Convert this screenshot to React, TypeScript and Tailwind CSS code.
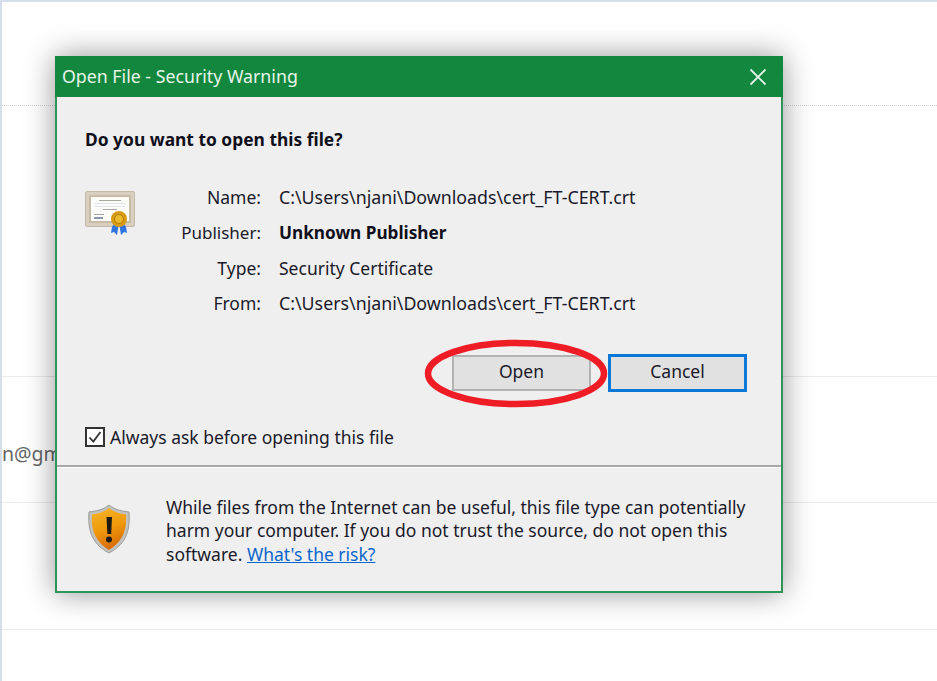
function CertIcon() {
  return (
    <svg width="52" height="46" viewBox="0 0 52 46" className="block">
      <rect x="0.5" y="0.5" width="49" height="35" rx="1.5" fill="#d8cfc0" stroke="#c4b9a6" />
      <rect x="4" y="4" width="42" height="28" fill="#c8bba6" />
      <rect x="6" y="6" width="38" height="24" fill="#fbfbf8" />
      <rect x="14" y="9" width="22" height="1" fill="#a9a9a0" />
      <rect x="10" y="12" width="30" height="1" fill="#dfe3ea" />
      <rect x="10" y="15" width="30" height="1" fill="#e3e6ec" />
      <rect x="18" y="18" width="14" height="1" fill="#a8a8a8" />
      <rect x="9" y="23" width="10" height="1" fill="#a5a5a5" />
      <rect x="9" y="26" width="9" height="2" fill="#8a97ad" />
      <path d="M27 36 l4 -6 l3 2 l-1 6 l-1 6 l-3 -3 l-3 1 z" fill="#2f74e0" />
      <path d="M41 36 l-4 -6 l-3 2 l1 6 l1 6 l3 -3 l3 1 z" fill="#2f74e0" />
      <circle cx="34" cy="28" r="8" fill="#d69a10" />
      <circle cx="34" cy="28" r="4.5" fill="#eab92c" stroke="#b47e0a" strokeWidth="1" />
    </svg>
  );
}

function ShieldIcon() {
  return (
    <svg width="44" height="50" viewBox="0 0 44 50" className="block">
      <defs>
        <linearGradient id="sh" x1="0" y1="0" x2="0.3" y2="1">
          <stop offset="0" stopColor="#f7b52a" />
          <stop offset="0.55" stopColor="#f09a0c" />
          <stop offset="1" stopColor="#d96f04" />
        </linearGradient>
      </defs>
      <path d="M22 1 C28 6 35 7 42 8 C43 24 41 39 22 49 C3 39 1 24 2 8 C9 7 16 6 22 1 Z" fill="#c2c2bf" stroke="#9a9a98" strokeWidth="1" />
      <path d="M22 4 C27 8 33 10 39 10.500 C40 24 37 37 22 46 C7 37 4 24 5 10.500 C11 10 17 8 22 4 Z" fill="url(#sh)" />
      <path d="M19.500 13 h5.500 l-0.800 17 h-3.800 z" fill="#1d1a14" />
      <circle cx="22" cy="35.500" r="3" fill="#1d1a14" />
    </svg>
  );
}

function Row({ label, labelClass, children }: { label: string; labelClass?: string; children: React.ReactNode }) {
  return (
    <div className="flex h-[35.300px] items-center">
      <div className={"w-[222px] pr-[18px] text-right " + (labelClass ?? "")}>{label}</div>
      <div>{children}</div>
    </div>
  );
}

export default function App() {
  return (
    <div className="relative h-[681px] w-[937px] overflow-hidden border-l-2 border-t-2 border-[#d5deeb] bg-white font-['Noto_Sans',sans-serif]">
      <div className="h-[104px] border-b border-dotted border-[#cfcfcf]" />
      <div className="h-[271px] border-b border-[#e8ecef]" />
      <div className="h-[126px] border-b border-[#e8ecef] pt-[62px] text-[19.500px] leading-[30px] text-[#666666]">
        <span>n@gmail.com</span>
      </div>
      <div className="h-[127px] border-b border-[#e8ecef]" />

      <div className="absolute left-[53px] top-[54px] flex h-[537px] w-[728px] flex-col border-2 border-t-0 border-[#2f9458] bg-[#efefef] text-[17.500px] text-[#1a1a2a] shadow-[0_0_28px_rgba(0,0,0,0.42)]">
        <div className="mx-[-2px] flex h-[41px] shrink-0 items-center justify-between bg-[#14873f] pl-[7px] pr-[16px] text-[#e6f5ea]">
          <span className="text-[17.750px]">Open File - Security Warning</span>
          <svg width="18" height="18" viewBox="0 0 18 18">
            <path d="M1.500 1.500 L16.500 16.500 M16.500 1.500 L1.500 16.500" stroke="#e6f5ea" strokeWidth="1.800" />
          </svg>
        </div>

        <div className="flex flex-1 flex-col">
          <h1 className="ml-[28px] mt-[28px] text-[17.400px] font-bold leading-[28px] text-[#10101c]">Do you want to open this file?</h1>

          <div className="relative mt-[26.500px]">
            <div className="absolute left-[28px] top-[11.500px]">
              <CertIcon />
            </div>
            <Row label="Name:"><span className="text-[17.800px]">C:\Users\njani\Downloads\cert_FT-CERT.crt</span></Row>
            <Row label="Publisher:" labelClass="text-[17px]">
              <b className="text-[17.200px] text-[#10101c]">Unknown Publisher</b>
            </Row>
            <Row label="Type:">Security Certificate</Row>
            <Row label="From:"><span className="text-[17.800px]">C:\Users\njani\Downloads\cert_FT-CERT.crt</span></Row>
          </div>

          <div className="mt-[33px] flex items-start justify-end gap-[17px] pr-[34px]">
            <button className="mt-[1px] h-[36px] w-[139px] border-2 border-[#b2b2b2] bg-[#e1e1e1] pb-[3px]">Open</button>
            <button className="h-[38px] w-[139px] border-[3px] border-[#0a78d7] bg-[#e1e1e1] pb-[3px]">Cancel</button>
          </div>

          <label className="ml-[28px] mt-[33px] flex h-[24px] items-center gap-[5px]">
            <span className="flex h-[20px] w-[20px] items-center justify-center border-2 border-[#333333] bg-white">
              <svg width="16" height="16" viewBox="0 0 16 16">
                <path d="M2.500 8.500 L6.300 12.500 L13.500 3" fill="none" stroke="#333333" strokeWidth="1.800" />
              </svg>
            </span>
            Always ask before opening this file
          </label>

          <div className="mt-[16px] h-[2px] bg-[#a8a8a8] shadow-[0_1px_0_#ffffff]" />

          <div className="flex flex-1 items-start">
            <div className="ml-[30px] mt-[37px] w-[79px]">
              <ShieldIcon />
            </div>
            <p className="mt-[29px] w-[600px] leading-[23.400px]">
              While files from the Internet can be useful, this file type can potentially harm your computer. If you do not trust the source, do not open this software.{" "}
              <a className="text-[#0a66cc] underline">What's the risk?</a>
            </p>
          </div>
        </div>
      </div>

      <svg className="absolute left-[422px] top-[336px]" width="184" height="72" viewBox="0 0 184 72">
        <ellipse cx="92" cy="35.500" rx="88" ry="30.500" fill="none" stroke="#ee1c25" strokeWidth="6.500" />
      </svg>
    </div>
  );
}
